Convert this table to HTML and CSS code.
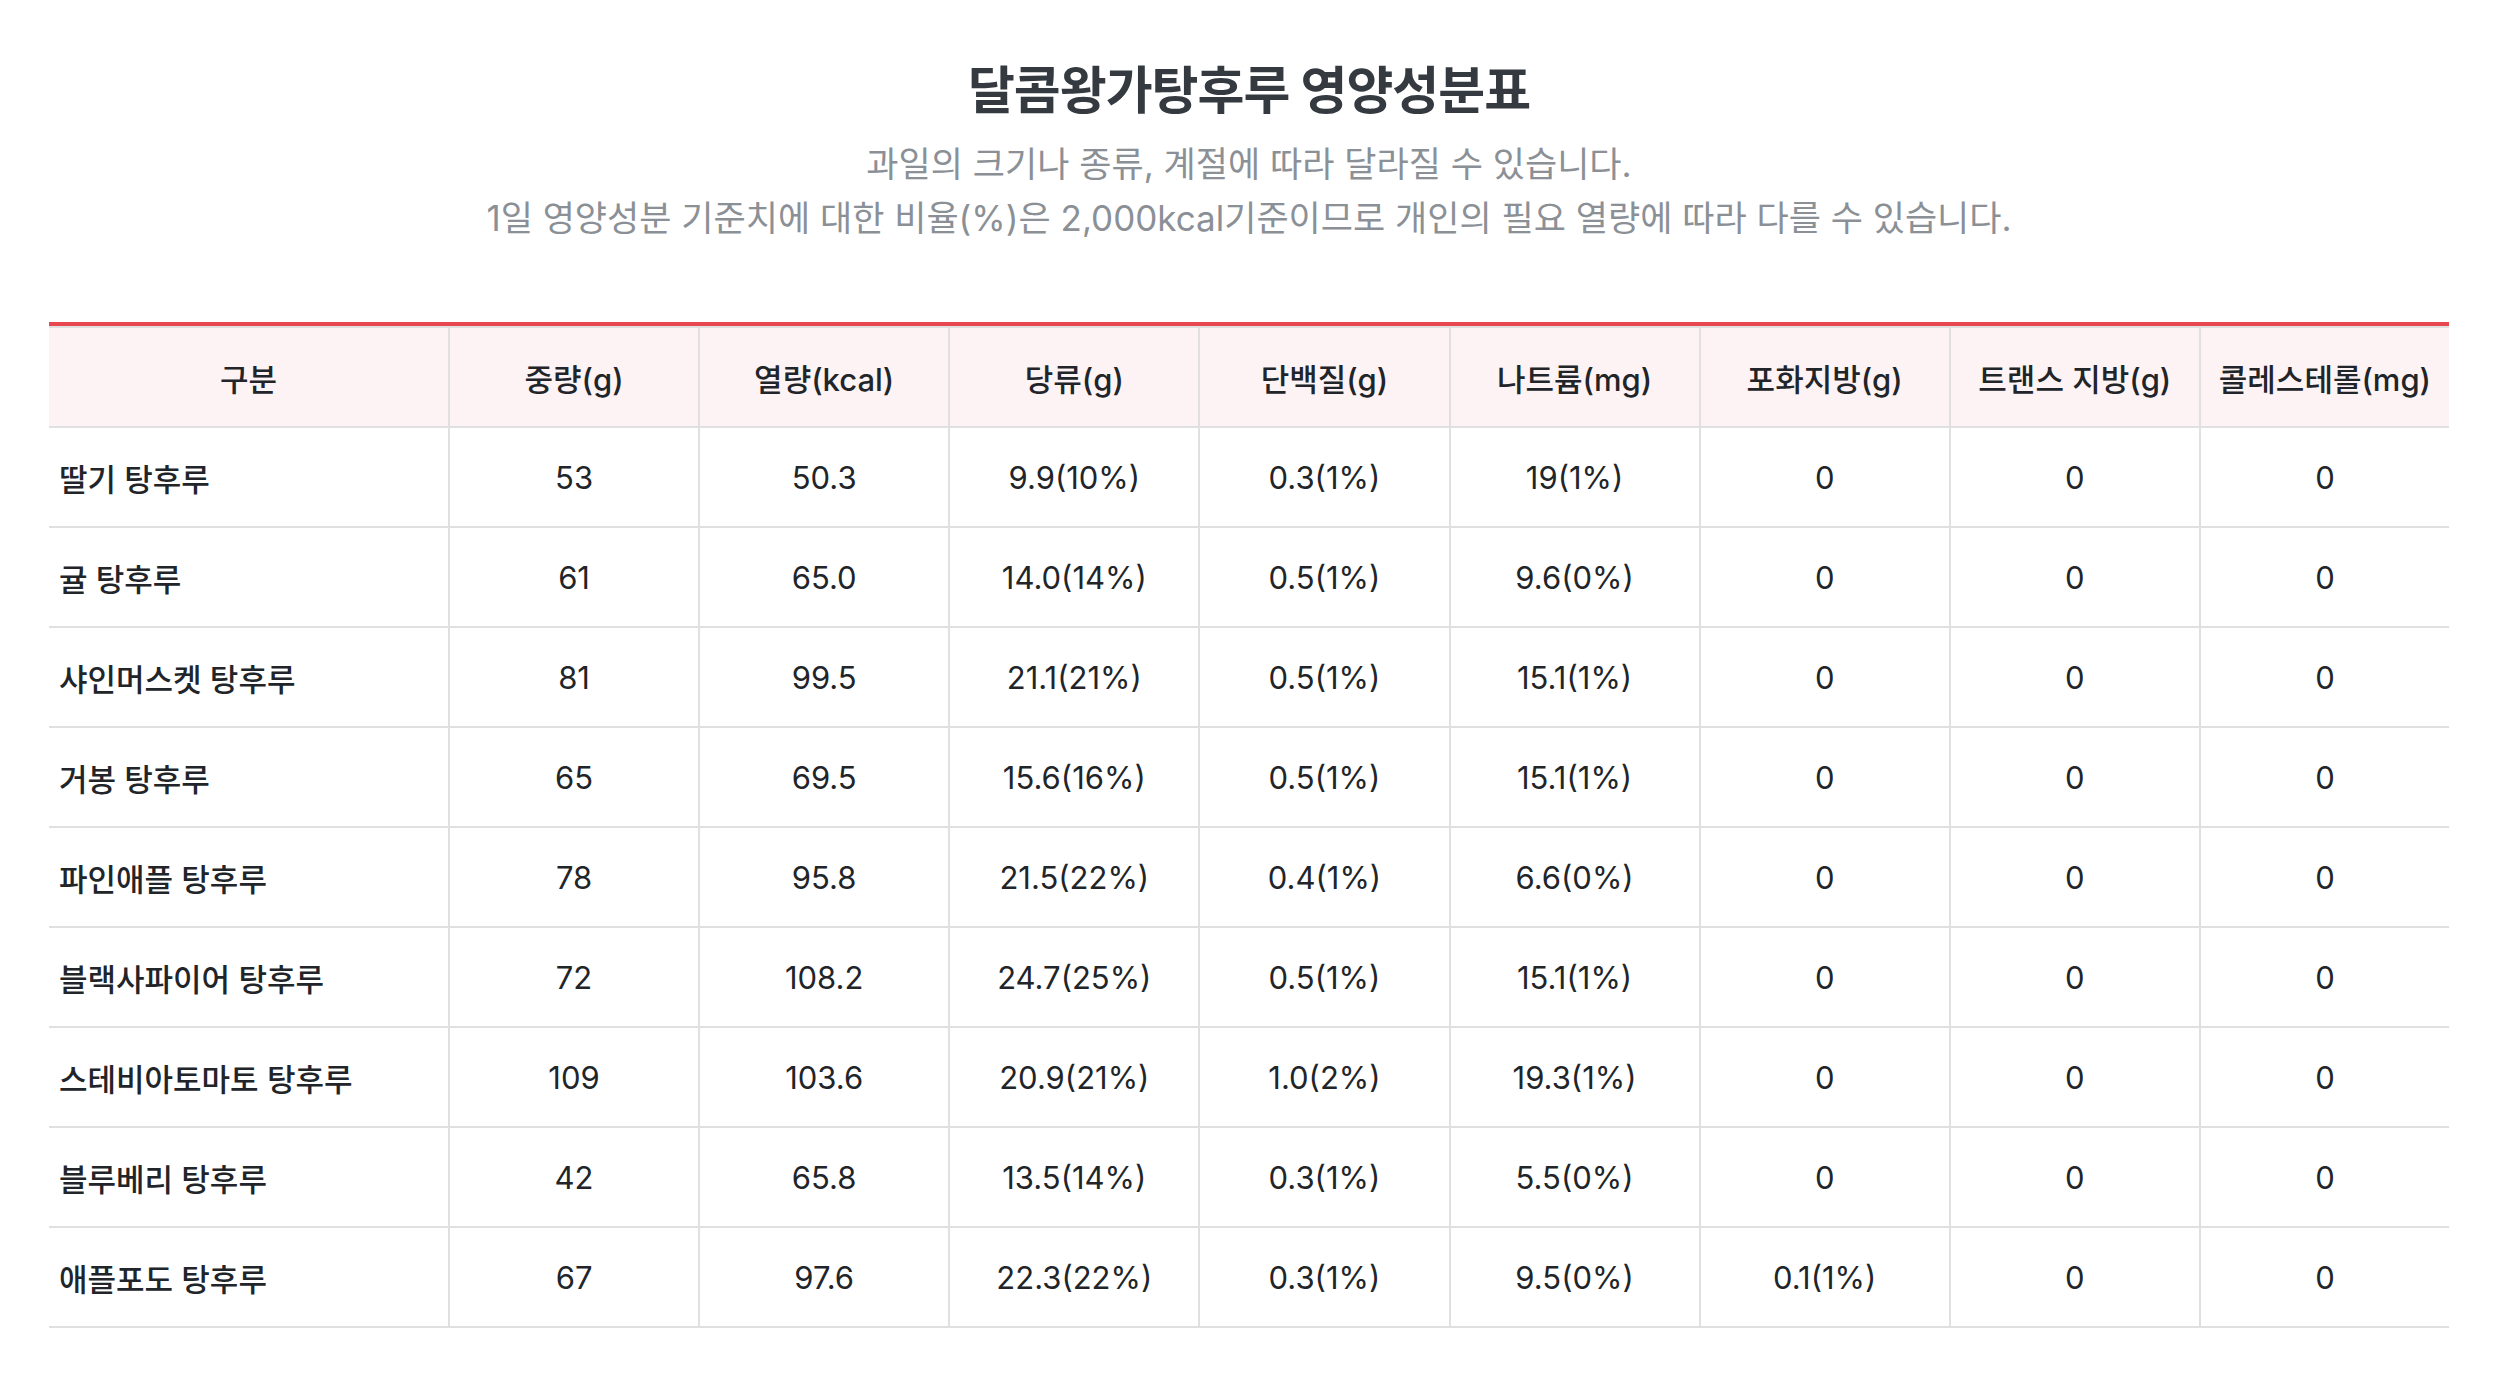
FILE: index.html
```html
<!DOCTYPE html>
<html lang="ko">
<head>
<meta charset="utf-8">
<title>달콤왕가탕후루 영양성분표</title>
<link rel="stylesheet" href="styles.css">
</head>
<body>
<main class="page">
  <header class="intro">
    <h1 class="title">달콤왕가탕후루 영양성분표</h1>
    <p class="desc">과일의 크기나 종류, 계절에 따라 달라질 수 있습니다.<br>1일 영양성분 기준치에 대한 비율(%)은 2,000kcal기준이므로 개인의 필요 열량에 따라 다를 수 있습니다.</p>
  </header>
  <div class="table-wrap">
    <table class="nutri">
      <colgroup><col class="c-name"><col><col><col><col><col><col><col><col></colgroup>
      <thead>
        <tr><th>구분</th><th>중량(g)</th><th>열량(kcal)</th><th>당류(g)</th><th>단백질(g)</th><th>나트륨(mg)</th><th>포화지방(g)</th><th>트랜스 지방(g)</th><th>콜레스테롤(mg)</th></tr>
      </thead>
      <tbody>
        <tr><td>딸기 탕후루</td><td>53</td><td>50.3</td><td>9.9(10%)</td><td>0.3(1%)</td><td>19(1%)</td><td>0</td><td>0</td><td>0</td></tr>
        <tr><td>귤 탕후루</td><td>61</td><td>65.0</td><td>14.0(14%)</td><td>0.5(1%)</td><td>9.6(0%)</td><td>0</td><td>0</td><td>0</td></tr>
        <tr><td>샤인머스켓 탕후루</td><td>81</td><td>99.5</td><td>21.1(21%)</td><td>0.5(1%)</td><td>15.1(1%)</td><td>0</td><td>0</td><td>0</td></tr>
        <tr><td>거봉 탕후루</td><td>65</td><td>69.5</td><td>15.6(16%)</td><td>0.5(1%)</td><td>15.1(1%)</td><td>0</td><td>0</td><td>0</td></tr>
        <tr><td>파인애플 탕후루</td><td>78</td><td>95.8</td><td>21.5(22%)</td><td>0.4(1%)</td><td>6.6(0%)</td><td>0</td><td>0</td><td>0</td></tr>
        <tr><td>블랙사파이어 탕후루</td><td>72</td><td>108.2</td><td>24.7(25%)</td><td>0.5(1%)</td><td>15.1(1%)</td><td>0</td><td>0</td><td>0</td></tr>
        <tr><td>스테비아토마토 탕후루</td><td>109</td><td>103.6</td><td>20.9(21%)</td><td>1.0(2%)</td><td>19.3(1%)</td><td>0</td><td>0</td><td>0</td></tr>
        <tr><td>블루베리 탕후루</td><td>42</td><td>65.8</td><td>13.5(14%)</td><td>0.3(1%)</td><td>5.5(0%)</td><td>0</td><td>0</td><td>0</td></tr>
        <tr><td>애플포도 탕후루</td><td>67</td><td>97.6</td><td>22.3(22%)</td><td>0.3(1%)</td><td>9.5(0%)</td><td>0.1(1%)</td><td>0</td><td>0</td></tr>
      </tbody>
    </table>
  </div>
</main>
</body>
</html>
```
FILE: styles.css
```css
html, body {
  margin: 0;
  padding: 0;
  background: #ffffff;
}

body {
  font-family: Inter, "Noto Sans CJK KR", sans-serif;
  color: #212529;
}

.page {
  width: 2400px;
  margin-left: 49px;
  padding-top: 57px;
}

.intro {
  text-align: center;
}

.title {
  margin: 0;
  font-size: 51px;
  line-height: 68px;
  font-weight: 700;
  color: #343a40;
  letter-spacing: -1px;
}

.desc {
  margin: 0;
  margin-top: 12px;
  font-size: 35px;
  line-height: 54px;
  font-weight: 400;
  color: #8b9096;
  letter-spacing: 0;
}

.table-wrap {
  margin-top: 77px;
  border-top: 4px solid #e8474f;
}

.nutri {
  width: 100%;
  table-layout: fixed;
  border-collapse: separate;
  border-spacing: 0;
}

.nutri .c-name {
  width: 399px;
}

.nutri th,
.nutri td {
  height: 98px;
  padding: 0;
  text-align: center;
  vertical-align: middle;
  font-size: 31px;
  border-bottom: 2px solid #e0e0e0;
  border-left: 2px solid #e0e0e0;
  white-space: nowrap;
}

.nutri th:first-child,
.nutri td:first-child {
  border-left: none;
}

.nutri th {
  background: #fdf3f4;
  border-top: 2px solid #e0e0e0;
  font-weight: 500;
  color: #212529;
  letter-spacing: 0;
}

.nutri td {
  font-weight: 400;
  color: #212529;
  letter-spacing: 0;
}

.nutri td:first-child {
  text-align: left;
  padding-left: 10px;
  font-weight: 500;
}
```
